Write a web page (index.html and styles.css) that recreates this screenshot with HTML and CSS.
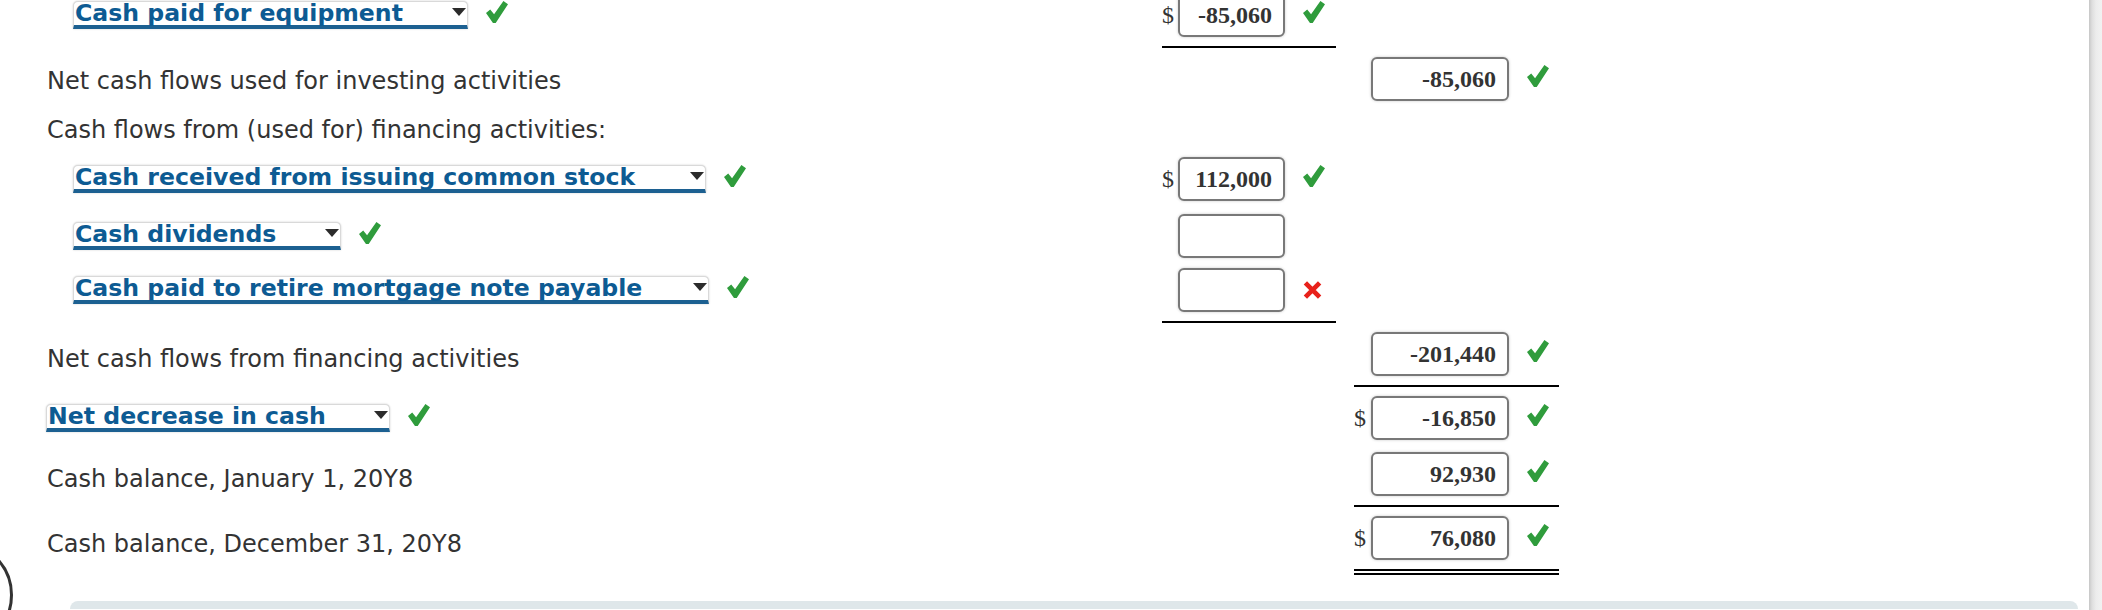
FILE: index.html
```html
<!DOCTYPE html>
<html lang="en">
<head>
<meta charset="utf-8">
<title>Statement of Cash Flows</title>
<link rel="stylesheet" href="styles.css">
</head>
<body>
<div class="page">
  <div class="sheet">

    <div class="row">
      <div class="label indent">
        <div class="dd w-equip"><span class="dd-text">Cash paid for equipment</span><svg class="arrow" viewBox="0 0 14 8" width="14" height="8"><path d="M0 0H14L7 8Z"/></svg></div>
        <svg class="mark" viewBox="0 0 24 24" width="22" height="24"><path d="M0 13.2L4.6 9.2 8.8 14.4 19 0 24 3.6 10.6 24H7.6Z"/></svg>
      </div>
      <div class="amt b"><span class="cur">$</span><input class="num" type="text" value="-85,060" readonly><svg class="mark" viewBox="0 0 24 24" width="22" height="24"><path d="M0 13.2L4.6 9.2 8.8 14.4 19 0 24 3.6 10.6 24H7.6Z"/></svg></div>
      <div class="amt c"></div>
    </div>

    <div class="rule"><div></div><div class="amt-rule"><i class="line-b"></i></div><div></div></div>

    <div class="row mt9">
      <div class="label text t-invest">Net cash flows used for investing activities</div>
      <div class="amt b"></div>
      <div class="amt c"><span class="cur"></span><input class="num" type="text" value="-85,060" readonly><svg class="mark" viewBox="0 0 24 24" width="22" height="24"><path d="M0 13.2L4.6 9.2 8.8 14.4 19 0 24 3.6 10.6 24H7.6Z"/></svg></div>
    </div>

    <div class="row mt7">
      <div class="label">Cash flows from (used for) financing activities:</div>
      <div class="amt b"></div>
      <div class="amt c"></div>
    </div>

    <div class="row mt5">
      <div class="label indent">
        <div class="dd w-stock"><span class="dd-text">Cash received from issuing common stock</span><svg class="arrow" viewBox="0 0 14 8" width="14" height="8"><path d="M0 0H14L7 8Z"/></svg></div>
        <svg class="mark" viewBox="0 0 24 24" width="22" height="24"><path d="M0 13.2L4.6 9.2 8.8 14.4 19 0 24 3.6 10.6 24H7.6Z"/></svg>
      </div>
      <div class="amt b"><span class="cur">$</span><input class="num" type="text" value="112,000" readonly><svg class="mark" viewBox="0 0 24 24" width="22" height="24"><path d="M0 13.2L4.6 9.2 8.8 14.4 19 0 24 3.6 10.6 24H7.6Z"/></svg></div>
      <div class="amt c"></div>
    </div>

    <div class="row mt13">
      <div class="label indent">
        <div class="dd w-div"><span class="dd-text">Cash dividends</span><svg class="arrow" viewBox="0 0 14 8" width="14" height="8"><path d="M0 0H14L7 8Z"/></svg></div>
        <svg class="mark" viewBox="0 0 24 24" width="22" height="24"><path d="M0 13.2L4.6 9.2 8.8 14.4 19 0 24 3.6 10.6 24H7.6Z"/></svg>
      </div>
      <div class="amt b"><span class="cur"></span><input class="num" type="text" value="" readonly></div>
      <div class="amt c"></div>
    </div>

    <div class="row mt10">
      <div class="label indent">
        <div class="dd w-mort"><span class="dd-text">Cash paid to retire mortgage note payable</span><svg class="arrow" viewBox="0 0 14 8" width="14" height="8"><path d="M0 0H14L7 8Z"/></svg></div>
        <svg class="mark" viewBox="0 0 24 24" width="22" height="24"><path d="M0 13.2L4.6 9.2 8.8 14.4 19 0 24 3.6 10.6 24H7.6Z"/></svg>
      </div>
      <div class="amt b"><span class="cur"></span><input class="num" type="text" value="" readonly><svg class="cross" viewBox="0 0 20 20" width="19" height="20"><path d="M2.5 2.5L17.5 17.5M17.5 2.5L2.5 17.5"/></svg></div>
      <div class="amt c"></div>
    </div>

    <div class="rule mt10"><div></div><div class="amt-rule"><i class="line-b"></i></div><div></div></div>

    <div class="row mt9">
      <div class="label text">Net cash flows from financing activities</div>
      <div class="amt b"></div>
      <div class="amt c"><span class="cur"></span><input class="num" type="text" value="-201,440" readonly><svg class="mark" viewBox="0 0 24 24" width="22" height="24"><path d="M0 13.2L4.6 9.2 8.8 14.4 19 0 24 3.6 10.6 24H7.6Z"/></svg></div>
    </div>

    <div class="rule"><div></div><div></div><div class="amt-rule"><i class="line-c"></i></div></div>

    <div class="row mt9">
      <div class="label flush">
        <div class="dd w-net"><span class="dd-text">Net decrease in cash</span><svg class="arrow" viewBox="0 0 14 8" width="14" height="8"><path d="M0 0H14L7 8Z"/></svg></div>
        <svg class="mark" viewBox="0 0 24 24" width="22" height="24"><path d="M0 13.2L4.6 9.2 8.8 14.4 19 0 24 3.6 10.6 24H7.6Z"/></svg>
      </div>
      <div class="amt b"></div>
      <div class="amt c"><span class="cur">$</span><input class="num" type="text" value="-16,850" readonly><svg class="mark" viewBox="0 0 24 24" width="22" height="24"><path d="M0 13.2L4.6 9.2 8.8 14.4 19 0 24 3.6 10.6 24H7.6Z"/></svg></div>
    </div>

    <div class="row mt12">
      <div class="label text">Cash balance, January 1, 20Y8</div>
      <div class="amt b"></div>
      <div class="amt c"><span class="cur"></span><input class="num" type="text" value="92,930" readonly><svg class="mark" viewBox="0 0 24 24" width="22" height="24"><path d="M0 13.2L4.6 9.2 8.8 14.4 19 0 24 3.6 10.6 24H7.6Z"/></svg></div>
    </div>

    <div class="rule"><div></div><div></div><div class="amt-rule"><i class="line-c"></i></div></div>

    <div class="row mt9">
      <div class="label text t-end">Cash balance, December 31, 20Y8</div>
      <div class="amt b"></div>
      <div class="amt c"><span class="cur">$</span><input class="num" type="text" value="76,080" readonly><svg class="mark" viewBox="0 0 24 24" width="22" height="24"><path d="M0 13.2L4.6 9.2 8.8 14.4 19 0 24 3.6 10.6 24H7.6Z"/></svg></div>
    </div>

    <div class="rule double"><div></div><div></div><div class="amt-rule"><i class="line-c"></i></div></div>

  </div>
  <div class="hint-box"></div>
</div>
<div class="scroll-edge"></div>
<div class="help-wrap"><div class="help-circle"></div></div>
</body>
</html>
```

FILE: styles.css
```css
html, body {
  margin: 0;
  height: 610px;
  overflow: hidden;
  background: #ffffff;
}

body {
  position: relative;
  display: flex;
  font-family: "DejaVu Sans", Verdana, sans-serif;
  color: #333333;
}

.page {
  flex: 1;
  min-width: 0;
  height: 610px;
  display: flex;
  flex-direction: column;
  overflow: hidden;
}

.sheet {
  margin-top: -7px;
}

.row {
  display: grid;
  grid-template-columns: 1162px 192px 1fr;
  height: 44px;
  align-items: center;
}

.mt5 { margin-top: 5px; }
.mt7 { margin-top: 7px; }
.mt9 { margin-top: 9px; }
.mt10 { margin-top: 10px; }
.mt12 { margin-top: 12px; }
.mt13 { margin-top: 13px; }

.label {
  display: flex;
  align-items: center;
  gap: 18px;
  padding-left: 47px;
  font-size: 24px;
  white-space: nowrap;
}

.label.indent { padding-left: 73px; }
.label.flush { padding-left: 46px; }
.label.text { padding-top: 9px; }
.label.text.t-invest { padding-top: 4px; }
.label.text.t-end { padding-top: 12px; }

.dd {
  box-sizing: border-box;
  display: flex;
  align-items: center;
  height: 28px;
  padding: 0 1px 0 1px;
  background: #ffffff;
  border: 1px solid #d9d9d9;
  border-bottom: 4px solid #1c6091;
  border-radius: 5px 5px 0 0;
  box-shadow: 0 0 2px rgba(0, 0, 0, 0.22);
  color: #0d5b93;
  font-weight: bold;
  font-size: 23.6px;
  line-height: 23px;
}

.dd-text { flex: 1; }

.arrow {
  flex: none;
  margin-bottom: 4px;
  fill: #2b2b2b;
}

.w-equip { width: 395px; }
.w-stock { width: 633px; }
.w-div { width: 268px; }
.w-mort { width: 636px; }
.w-net { width: 344px; }

.mark {
  flex: none;
  fill: #2f9c3c;
  margin-bottom: 6px;
}

.amt {
  display: flex;
  align-items: center;
  height: 44px;
}

.amt .mark { margin-left: 18px; }

.cur {
  flex: none;
  width: 16px;
  font-family: "Liberation Serif", "Times New Roman", serif;
  font-size: 24px;
  color: #333333;
}

.c .cur { width: 17px; }

.num {
  box-sizing: border-box;
  flex: none;
  width: 107px;
  height: 44px;
  margin: 0;
  padding: 0 11px 0 4px;
  border: 2px solid #787878;
  border-radius: 6px;
  background: #ffffff;
  box-shadow: 0 0 3px rgba(0, 0, 0, 0.22);
  font: bold 24px "Liberation Serif", "Times New Roman", serif;
  color: #333333;
  text-align: right;
  outline: none;
}

.c .num { width: 138px; }

.cross {
  flex: none;
  margin-left: 18px;
  stroke: #e8211b;
  stroke-width: 5;
  fill: none;
}

.rule {
  display: grid;
  grid-template-columns: 1162px 192px 1fr;
  height: 2px;
  margin-top: 9px;
}

.amt-rule { display: flex; }

.line-b {
  display: block;
  width: 174px;
  height: 2px;
  background: #000000;
}

.line-c {
  display: block;
  width: 205px;
  height: 2px;
  background: #000000;
}

.rule.double { height: 6px; }

.rule.double .line-c {
  box-sizing: border-box;
  height: 6px;
  background: transparent;
  border-top: 2px solid #000000;
  border-bottom: 2px solid #000000;
}

.hint-box {
  margin: 26px 11px 0 70px;
  height: 8px;
  flex: none;
  background: #dfe7ea;
  border-radius: 8px 8px 0 0;
}

.scroll-edge {
  flex: none;
  width: 13px;
  background: linear-gradient(to right, #c6c6c6 0, #dedede 3px, #ececec 7px, #f2f2f2 13px);
}

.help-wrap {
  position: absolute;
  left: 0;
  top: 541px;
  width: 14px;
  height: 69px;
  overflow: hidden;
}

.help-circle {
  position: absolute;
  left: -95px;
  top: 0;
  width: 108px;
  height: 108px;
  box-sizing: border-box;
  border: 3px solid #333333;
  border-radius: 50%;
}
```
